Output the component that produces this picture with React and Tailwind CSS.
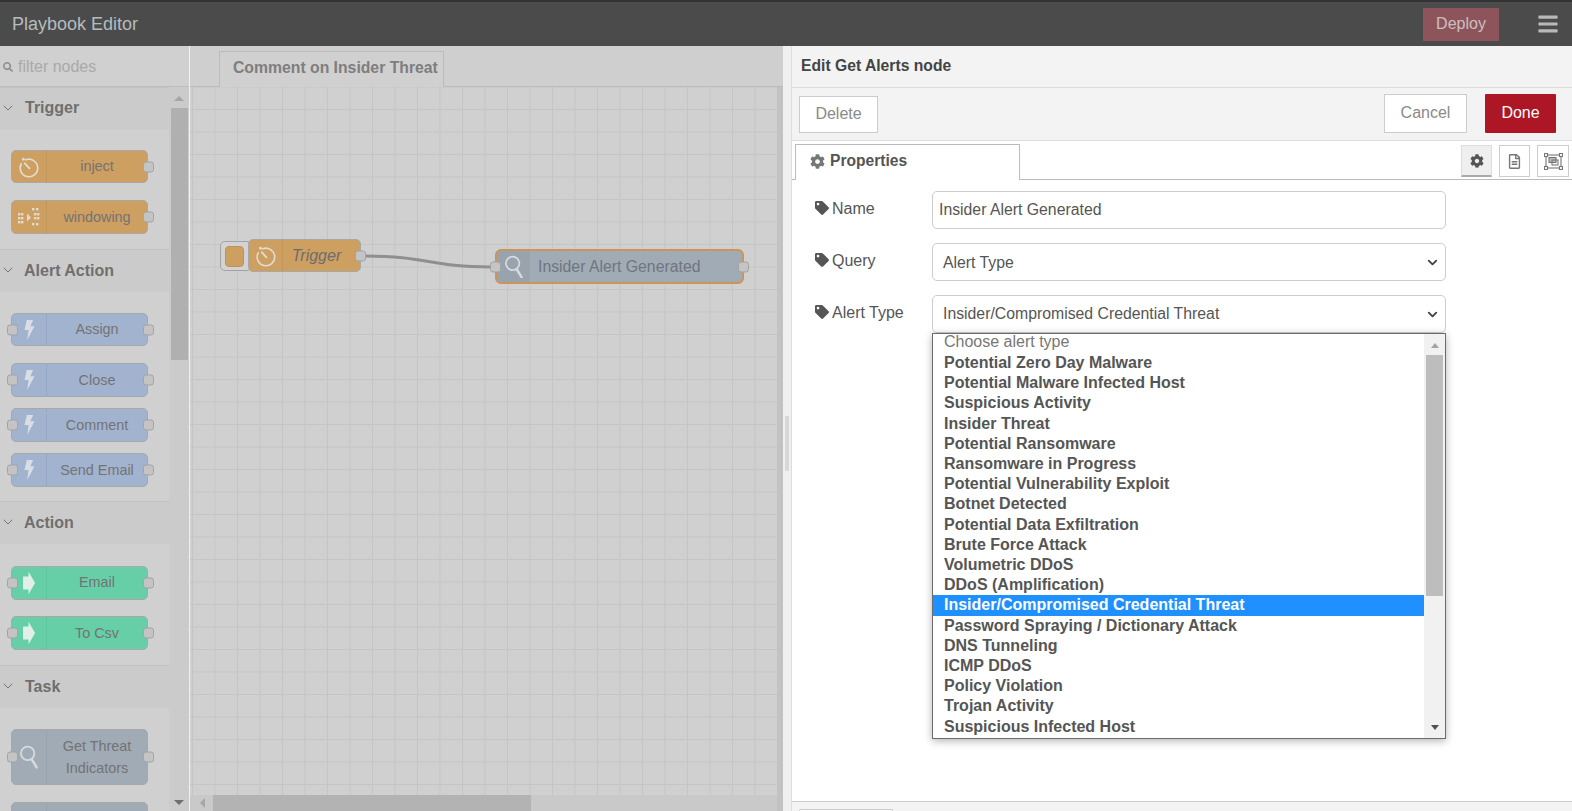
import React from "react";
import { FaTag, FaCog, FaBars, FaSearch, FaRegFileAlt } from "react-icons/fa";
import { ChevronDown } from "lucide-react";

const font = { fontFamily: '"Liberation Sans", Arial, sans-serif' };

function Timer({ size = 26 }) {
  return (
    <svg width={size} height={size} viewBox="0 0 26 26" fill="none" stroke="#e2ddd2" strokeWidth="1.7">
      <path d="M9.5 5.2A9.5 9.5 0 1 1 4.6 9.5" strokeLinecap="round" />
      <path d="M13.5 14.5L8.5 9" strokeLinecap="round" strokeWidth="2" />
      <circle cx="7" cy="4.6" r="1.5" fill="#e2ddd2" stroke="none" />
    </svg>
  );
}
function WindowIcon() {
  return (
    <svg width="22" height="20" viewBox="0 0 22 20" fill="#e0dcd2">
      {[[0,6],[0,10],[0,14],[3,6],[3,10],[3,14],[14,1],[18,1],[16,6],[19,6],[16,10],[19,10],[14,16],[18,16]].map(([x,y],i)=>(<rect key={i} x={x} y={y} width="2.4" height="2.4" />))}
      <path d="M9 6.5l4 4-4 4z" />
    </svg>
  );
}
function Bolt() {
  return (
    <svg width="11" height="20" viewBox="0 0 12 22" fill="#d8dde6"><path d="M3 0h7L7 7h4.5L3.5 22 5 11H0.5z" /></svg>
  );
}
function Arrow() {
  return (
    <svg width="13" height="24" viewBox="0 0 14 24" fill="#dff0e9"><path d="M0 5h6V0l7 12-7 12v-5H0z" /></svg>
  );
}
function Glass({ size = 18 }) {
  return (
    <svg width={size} height={size * 1.33} viewBox="0 0 20 26" fill="none" stroke="#d5dade" strokeWidth="2" strokeLinecap="round">
      <circle cx="8.5" cy="9" r="7.5" />
      <path d="M13 15.5l5.5 9" strokeWidth="2.8" />
    </svg>
  );
}

function Port({ className = "" }) {
  return <span className={"absolute w-[11px] h-[11px] rounded-[3px] border border-[#a3a3a3] bg-[#c4c4c4] " + className} />;
}

function PaletteNode({ label, color, divider, icon, left = true, h = "h-[33px]", mt = "", lift = "" }) {
  return (
    <div className={"relative w-[137px] ml-[11px] rounded-[5px] border border-[#a8a8a8] flex items-stretch " + h + " " + mt + " " + color}>
      <div className={"w-[35px] shrink-0 flex items-center justify-center border-r " + divider}>{icon}</div>
      <div className={"flex-1 flex items-center justify-center text-center text-[14.4px] leading-[22px] text-[#737373] " + lift}>{label}</div>
      {left && <Port className="left-[-5px] top-1/2 -translate-y-1/2" />}
      <Port className="right-[-7px] top-1/2 -translate-y-1/2" />
    </div>
  );
}

function Category({ title, tx = "pl-[25px]", nudge = "" }) {
  return (
    <div className={"h-[43px] bg-[#cbcbcb] flex items-center border-t border-[#c2c2c2] relative " + tx}>
      <ChevronDown size={16} strokeWidth={1.5} className="absolute left-0 top-[12px] text-[#757575]" />
      <span className={"font-bold text-[16px] text-[#6f6f6f] " + nudge}>{title}</span>
    </div>
  );
}

const amber = "bg-[#cd9f61]";
const amberD = "border-[#c39759]";
const blue = "bg-[#a2b3cf]";
const blueD = "border-[#98a9c5]";
const green = "bg-[#66cfa8]";
const greenD = "border-[#60c6a0]";
const slate = "bg-[#a0abb6]";
const slateD = "border-[#98a3ae]";

function Palette() {
  return (
    <aside className="w-[190px] shrink-0 bg-[#cfcfcf] border-r border-[#f1f1f1] flex flex-col overflow-hidden">
      <div className="h-[41px] shrink-0 flex items-center border-b border-[#bcbcbc] bg-[#d0d0d0]">
        <FaSearch size={10} className="ml-[3px] text-[#8e8e8e] mt-[1px]" />
        <span className="ml-[5px] text-[16px] text-[#a9a9a9] mt-[1px]">filter nodes</span>
      </div>
      <div className="flex flex-1 min-h-0">
        <div className="w-[169px] shrink-0 overflow-hidden">
          <Category title="Trigger" nudge="mb-[2px]" />
          <div className="h-[119px] bg-[#d0d0d0] pt-[20px]">
            <PaletteNode label="inject" color={amber} divider={amberD} left={false} lift="pb-[2px]" icon={<Timer size={24} />} />
            <PaletteNode label="windowing" color={amber} divider={amberD} left={false} mt="mt-[17px]" h="h-[34px]" icon={<WindowIcon />} />
          </div>
          <Category title="Alert Action" tx="pl-[24px]" />
          <div className="h-[209px] bg-[#d0d0d0] pt-[21px]">
            <PaletteNode label="Assign" color={blue} divider={blueD} lift="pb-[2px]" icon={<Bolt />} />
            <PaletteNode label="Close" color={blue} divider={blueD} mt="mt-[17px]" h="h-[34px]" icon={<Bolt />} />
            <PaletteNode label="Comment" color={blue} divider={blueD} mt="mt-[11px]" h="h-[34px]" icon={<Bolt />} />
            <PaletteNode label="Send Email" color={blue} divider={blueD} mt="mt-[11px]" h="h-[34px]" icon={<Bolt />} />
          </div>
          <Category title="Action" tx="pl-[24px]" />
          <div className="h-[121px] bg-[#d0d0d0] pt-[22px]">
            <PaletteNode label="Email" color={green} divider={greenD} lift="pb-[2px]" icon={<Arrow />} h="h-[34px]" />
            <PaletteNode label="To Csv" color={green} divider={greenD} mt="mt-[16px]" h="h-[34px]" icon={<Arrow />} />
          </div>
          <Category title="Task" />
          <div className="bg-[#d0d0d0] pt-[21px] h-[140px]">
            <PaletteNode label={<>Get Threat<br />Indicators</>} color={slate} divider={slateD} h="h-[56px]" icon={<Glass />} />
            <PaletteNode label="" color={slate} divider={slateD} h="h-[56px]" mt="mt-[17px]" icon={<Glass />} />
          </div>
        </div>
        <div className="w-[20px] shrink-0 bg-[#cbcbcb] flex flex-col items-center">
          <span className="mt-[9px] w-0 h-0 border-x-[5px] border-x-transparent border-b-[5px] border-b-[#a6a6a6]" />
          <span className="mt-[7px] w-[17px] h-[252px] bg-[#b0b0b0]" />
          <span className="mt-auto mb-[6px] w-0 h-0 border-x-[5px] border-x-transparent border-t-[5px] border-t-[#6f6f6f]" />
        </div>
      </div>
    </aside>
  );
}

function Canvas() {
  return (
    <main className="relative w-[593px] shrink-0 bg-[#d0d0d0] flex flex-col overflow-hidden">
      <div className="h-[41px] shrink-0 border-b border-[#bcbcbc] bg-[#cfcfcf] pl-[29px] flex items-end">
        <div className="w-[225px] h-[36px] mb-[-1px] border border-b-0 border-[#bcbcbc] bg-[#d0d0d0] flex items-center pl-[13px] pb-[3px] font-bold text-[15.75px] text-[#7e7e7e] whitespace-nowrap">
          Comment on Insider Threat
        </div>
      </div>
      <div className="relative flex-1 bg-[#d0d0d0] bg-[linear-gradient(#c5c5c5_1px,transparent_1px),linear-gradient(90deg,#c5c5c5_1px,transparent_1px)] bg-[size:22.5px_22.5px] bg-[position:2px_-0.5px]">
        <svg className="absolute left-[176px] top-[164px]" width="125" height="22" fill="none">
          <path d="M0 5 C60 5 65 16 125 16" stroke="#8f8f8f" strokeWidth="3" />
        </svg>
        <div className="absolute left-[30px] top-[154px] w-[32px] h-[30px] rounded-[5px] border border-[#a3a3a3] bg-[#d3d3d3] flex items-center pl-[4px]">
          <span className="w-[19px] h-[21px] rounded-[4px] bg-[#cd9f61] border border-[#bd9359]" />
        </div>
        <div className="absolute left-[58px] top-[152px] w-[113px] h-[33px] rounded-[5px] border border-[#a8a8a8] bg-[#cd9f61] flex items-stretch">
          <div className="w-[34px] flex items-center justify-center border-r border-[#c39759]"><Timer size={24} /></div>
          <div className="flex-1 flex items-center justify-center italic text-[16px] text-[#6d6d6d] pr-[10px]">Trigger</div>
          <Port className="right-[-6px] top-1/2 -translate-y-1/2" />
        </div>
        <div className="absolute left-[305px] top-[162px] w-[249px] h-[35px] rounded-[6px] border-[2px] border-[#cb9458] bg-[#a0abb6] flex items-stretch">
          <div className="w-[33px] flex items-center justify-center bg-[#98a3ae] rounded-l-[4px]"><Glass size={18} /></div>
          <div className="flex-1 flex items-center pl-[8px] text-[15.8px] text-[#6f767d] whitespace-nowrap">Insider Alert Generated</div>
          <Port className="left-[-7px] top-1/2 -translate-y-1/2" />
          <Port className="right-[-7px] top-1/2 -translate-y-1/2" />
        </div>
        <div className="absolute left-0 right-0 bottom-0 h-[16px] bg-[#c9c9c9] flex items-center pl-[10px]">
          <span className="w-0 h-0 border-y-[5px] border-y-transparent border-r-[5px] border-r-[#a6a6a6]" />
          <span className="ml-[8px] w-[318px] h-[16px] bg-[#b3b3b3]" />
        </div>
      </div>
      <div className="absolute right-0 top-[41px] bottom-0 w-[6px] bg-[#c2c2c2]" />
    </main>
  );
}

const options = [
  "Potential Zero Day Malware","Potential Malware Infected Host","Suspicious Activity","Insider Threat","Potential Ransomware","Ransomware in Progress","Potential Vulnerability Exploit","Botnet Detected","Potential Data Exfiltration","Brute Force Attack","Volumetric DDoS","DDoS (Amplification)","Insider/Compromised Credential Threat","Password Spraying / Dictionary Attack","DNS Tunneling","ICMP DDoS","Policy Violation","Trojan Activity","Suspicious Infected Host",
];

function Row({ label, children, mb }) {
  return (
    <div className={"flex " + mb}>
      <label className="w-[120px] pl-[3px] pt-[7px] shrink-0 flex items-start text-[16px] text-[#555] leading-[22px]">
        <FaTag size={14} className="mt-[3px] mr-[3px] text-[#555]" />
        {label}
      </label>
      {children}
    </div>
  );
}

function Select({ value, nudge = "" }) {
  return (
    <div className="w-[514px] h-[38px] rounded-[5px] border border-[#ccc] bg-white flex items-center justify-between pl-[10px] pr-[5px] text-[15.8px] text-[#555]">
      <span className={nudge}>{value}</span>
      <ChevronDown size={15} strokeWidth={3} className="text-[#444]" />
    </div>
  );
}

function Tray() {
  return (
    <section className="relative flex-1 min-w-0 flex flex-col bg-white border-l border-[#ddd]">
      <div className="h-[42px] shrink-0 bg-[#f3f3f3] border-b border-[#ddd] flex items-center pl-[9px] pb-[2px] font-bold text-[15.7px] text-[#444]">
        Edit Get Alerts node
      </div>
      <div className="h-[53px] shrink-0 bg-[#f3f3f3] border-b border-[#ddd] flex items-center justify-between pl-[7px] pr-[16px]">
        <button className="w-[79px] h-[37px] border border-[#ccc] bg-white text-[16px] text-[#8a8a8a]">Delete</button>
        <div className="flex gap-[18px] mb-[2px]">
          <button className="w-[83px] h-[39px] border border-[#ccc] bg-white text-[16px] text-[#8a8a8a]">Cancel</button>
          <button className="w-[71px] h-[39px] bg-[#ad1625] rounded-[1px] text-[16px] text-[#fff]">Done</button>
        </div>
      </div>
      <div className="relative h-[39px] shrink-0 border-b border-[#bbb] pl-[3px] flex items-end justify-between pr-[3px]">
        <div className="w-[225px] h-[36px] mb-[-1px] flex items-center pl-[14px] pb-[3px] gap-[5px] border border-b-0 border-[#bbb] bg-white rounded-t-[1px] font-bold text-[15.6px] text-[#555]">
          <FaCog size={15} className="text-[#777]" />
          Properties
        </div>
        <div className="flex gap-[7px] mb-[2px]">
          <span className="w-[31px] h-[32px] flex items-center justify-center bg-[#efefef] border border-[#ddd] border-b-[2px] border-b-[#aaa]"><FaCog size={14} className="text-[#555]" /></span>
          <span className="w-[31px] h-[32px] flex items-center justify-center bg-white border border-[#ccc]"><FaRegFileAlt size={15} className="text-[#777]" /></span>
          <span className="w-[32px] h-[32px] flex items-center justify-center bg-white border border-[#ccc]">
            <svg width="19" height="17" viewBox="0 0 19 17" fill="none" stroke="#777" strokeWidth="1.1">
              <rect x="2" y="2" width="15" height="13" />
              <rect x="5" y="4.5" width="7" height="5" fill="#bbb" />
              <rect x="8" y="7" width="6" height="5" />
              {[[0.5,0.5],[15.5,0.5],[0.5,13.5],[15.5,13.5]].map(([x,y],i)=>(<rect key={i} x={x} y={y} width="3" height="3" fill="#fff" />))}
            </svg>
          </span>
        </div>
      </div>
      <div className="pl-[20px] pt-[11px] relative flex-1">
        <Row label="Name" mb="mb-[14px]">
          <div className="w-[514px] h-[38px] rounded-[5px] border border-[#ccc] bg-white flex items-center pl-[6px] text-[15.8px] text-[#555]">Insider Alert Generated</div>
        </Row>
        <Row label="Query" mb="mb-[14px]"><Select value="Alert Type" nudge="pt-[2px]" /></Row>
        <Row label="Alert Type" mb=""><Select value="Insider/Compromised Credential Threat" /></Row>

        <div className="absolute left-[140px] top-[153px] w-[514px] h-[406px] border border-[#6c6c6c] bg-white shadow-[0_2px_8px_rgba(0,0,0,0.3)] flex overflow-hidden">
          <div className="w-[491px] shrink-0 text-[16px] leading-[20.2px] text-[#555] overflow-hidden">
            <div className="pl-[11px] font-normal text-[#777] h-[19px] leading-[16px]">Choose alert type</div>
            {options.map((o, i) => (
              <div key={o} className={"pl-[11px] font-bold whitespace-nowrap " + (i === 12 ? "bg-[#1e90ff] text-white" : "")}>{o}</div>
            ))}
          </div>
          <div className="flex-1 bg-[#f1f1f1] flex flex-col items-center pt-[9px]">
            <span className="w-0 h-0 border-x-[4px] border-x-transparent border-b-[5px] border-b-[#a3a3a3]" />
            <span className="mt-[7px] w-[17px] h-[241px] bg-[#bdbdbd]" />
            <span className="mt-auto mb-[8px] w-0 h-0 border-x-[4px] border-x-transparent border-t-[5px] border-t-[#505050]" />
          </div>
        </div>
      </div>
      <div className="h-[10px] shrink-0 bg-[#f3f3f3] border-t border-[#ccc] relative">
        <span className="absolute left-[7px] top-[7px] w-[94px] h-[3px] bg-white border border-[#ccc] border-b-0 rounded-t-[2px]" />
      </div>
    </section>
  );
}

export default function App() {
  return (
    <div style={font} className="w-[1572px] h-[811px] overflow-hidden flex flex-col bg-white">
      <header className="h-[46px] shrink-0 bg-[#4b4b4b] border-t-[2px] border-[#333] flex items-center justify-between">
        <span className="ml-[12px] text-[18px] text-[#b3bcbf]">Playbook Editor</span>
        <div className="flex items-center">
          <span className="w-[76px] h-[33px] bg-[#8d555b] flex items-center justify-center text-[16px] text-[#cdbfc0]">Deploy</span>
          <FaBars size={22} className="ml-[38px] mr-[13px] text-[#b9b9b9]" />
        </div>
      </header>
      <div className="flex flex-1 min-h-0">
        <Palette />
        <Canvas />
        <div className="w-[8px] shrink-0 bg-[#f0f0f0] flex items-center justify-center pt-[30px]">
          <span className="w-[4px] h-[55px] bg-[#d8d8d8]" />
        </div>
        <Tray />
      </div>
    </div>
  );
}
